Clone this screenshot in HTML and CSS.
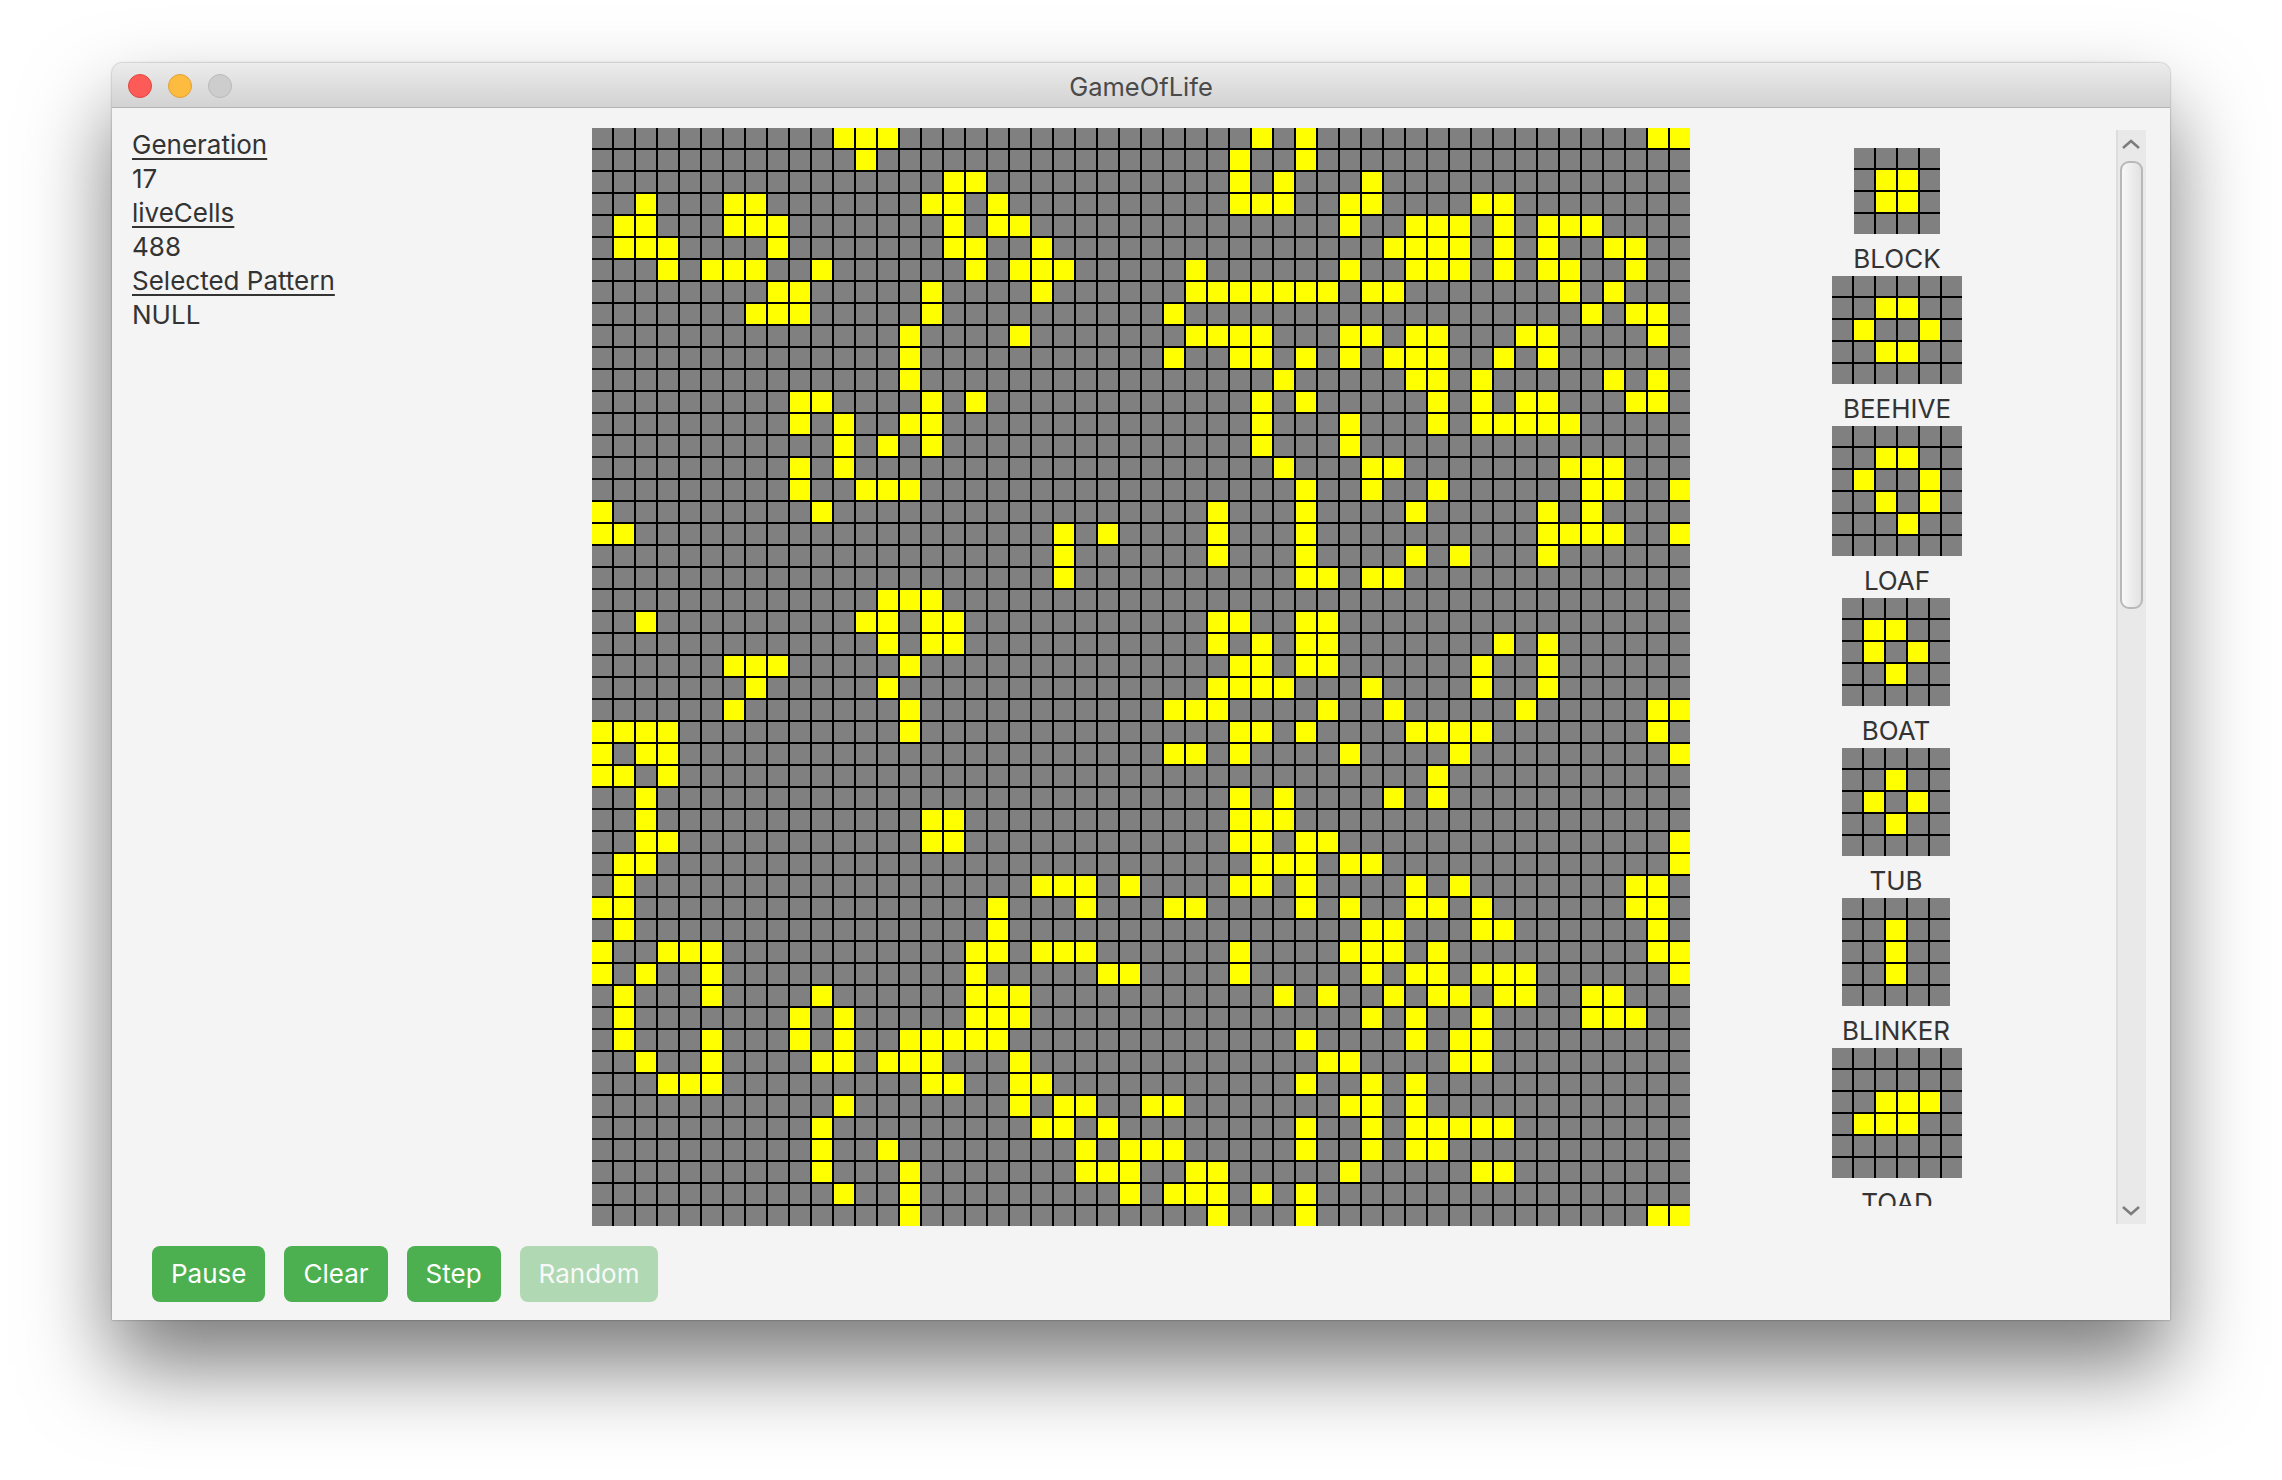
FILE: index.html
```html
<!doctype html>
<html lang="en">

<head>
  <meta charset="utf-8">
  <title>GameOfLife</title>
  <link rel="stylesheet" href="styles.css">
</head>

<body>
  <div class="window">
    <div class="titlebar">
      <div class="lights">
        <span class="light light-close"></span>
        <span class="light light-min"></span>
        <span class="light light-max"></span>
      </div>
      <div class="title">GameOfLife</div>
    </div>

    <div class="content">
      <div class="main">
        <div class="stats">
          <div class="stat-head">Generation</div>
          <div>17</div>
          <div class="stat-head">liveCells</div>
          <div>488</div>
          <div class="stat-head">Selected Pattern</div>
          <div>NULL</div>
        </div>

        <div class="board" id="board"></div>

        <div class="patterns">
          <div class="pattern-list" id="patterns"></div>
          <div class="scrollbar">
            <svg class="arrow" viewBox="0 0 18 10"><path d="M1 9 L9 2 L17 9" /></svg>
            <div class="thumb"></div>
            <svg class="arrow arrow-down" viewBox="0 0 18 10"><path d="M1 1 L9 8 L17 1" /></svg>
          </div>
        </div>
      </div>

      <div class="buttons">
        <button class="btn">Pause</button>
        <button class="btn">Clear</button>
        <button class="btn">Step</button>
        <button class="btn btn-disabled">Random</button>
      </div>
    </div>
  </div>

  <script src="game.js"></script>
</body>
</html>
```

FILE: styles.css
```css
body {
  margin: 0;
  height: 1480px;
  overflow: hidden;
  background-color: #fff;
  font-family: Inter, "Liberation Sans", sans-serif;
  font-size: 26px;
  color: #333;
}

.window {
  width: 2058px;
  height: 1257px;
  margin: 63px 0 0 112px;
  border-radius: 10px 10px 0 0;
  background-color: #f4f4f4;
  box-shadow: 0 0 2px rgba(0, 0, 0, 0.45), 0 46px 86px rgba(0, 0, 0, 0.52);
}

.titlebar {
  position: relative;
  display: flex;
  align-items: center;
  justify-content: center;
  box-sizing: border-box;
  height: 45px;
  padding-top: 2px;
  border-bottom: 1px solid #b3b3b3;
  border-radius: 10px 10px 0 0;
  background: linear-gradient(#ececec, #d2d2d2);
}
.lights {
  position: absolute;
  left: 16px;
  top: 11px;
  display: flex;
  gap: 16px;
}
.light {
  width: 24px;
  height: 24px;
  box-sizing: border-box;
  border-radius: 50%;
  border: 1px solid;
}
.light-close {
  background-color: #fc5b57;
  border-color: #e2463f;
}
.light-min {
  background-color: #fdbb3f;
  border-color: #e1a136;
}
.light-max {
  background-color: #cdcdcd;
  border-color: #b9b9b9;
}
.title {
  font-size: 25.5px;
  color: #4a4a4a;
}

.main {
  display: flex;
  height: 1098px;
  padding-top: 20px;
}

.stats {
  width: 460px;
  padding-left: 20px;
  line-height: 34px;
}
.stat-head {
  text-decoration: underline;
  text-decoration-thickness: 2px;
  text-underline-offset: 4px;
}

.board, .mini-board {
  display: grid;
  gap: 2px;
  background-color: #000;
  flex: none;
}
.board {
  grid-template-columns: repeat(50, 20px);
  grid-auto-rows: 20px;
  height: 1098px;
}
.mini-board {
  grid-auto-rows: 20px;
}
.cell {
  background-color: #808080;
}
.cell.alive {
  background-color: #ff0;
}

.patterns {
  display: flex;
  flex: 1;
  height: 1094px;
  margin-top: 2px;
}
.pattern-list {
  width: 414px;
  padding: 18px 12px 0 0;
  height: 1058px;
  overflow: hidden;
  display: flex;
  flex-direction: column;
  align-items: center;
}
.pattern-item {
  display: flex;
  flex-direction: column;
  align-items: center;
  flex: none;
}
.pattern-item.narrow {
  margin-right: 2px;
}
.pattern-name {
  height: 42px;
  line-height: 50px;
}

.scrollbar {
  position: relative;
  box-sizing: border-box;
  width: 30px;
  height: 1094px;
  background-color: #e9e9e9;
  border-left: 2px solid #dcdcdc;
}
.arrow {
  position: absolute;
  left: 4px;
  top: 9px;
  width: 18px;
  height: 10px;
  fill: none;
  stroke: #7d7d7d;
  stroke-width: 2.5;
}
.arrow-down {
  top: auto;
  bottom: 8px;
}
.thumb {
  position: absolute;
  left: 2px;
  top: 31px;
  box-sizing: border-box;
  width: 23px;
  height: 448px;
  border: 2px solid #b8b8b8;
  border-radius: 9px;
  background: linear-gradient(to right, #f8f8f8, #e2e2e2);
}

.buttons {
  display: flex;
  align-items: flex-start;
  gap: 19px;
  padding: 20px 0 0 40px;
}
.btn {
  height: 56px;
  padding: 0 19px 2px;
  border: 0;
  border-radius: 8px;
  background-color: #4caf50;
  color: #fff;
  font-family: inherit;
  font-size: 26px;
}
.btn-disabled {
  opacity: 0.4;
}
```

FILE: game.js
```js
// live cells of the board, one list of columns per row
const liveCells = [
  [11,12,13,30,32,48,49],
  [12,29,32],
  [16,17,29,31,35],
  [2,6,7,15,16,18,29,30,31,34,35,40,41],
  [1,2,6,7,8,16,18,19,34,37,38,39,41,43,44,45],
  [1,2,3,8,16,17,20,36,37,38,39,41,43,46,47],
  [3,5,6,7,10,17,19,20,21,27,34,37,38,39,41,43,44,47],
  [8,9,15,20,27,28,29,30,31,32,33,35,36,44,46],
  [7,8,9,15,26,45,47,48],
  [14,19,27,28,29,30,34,35,37,38,42,43,48],
  [14,26,29,30,32,34,36,37,38,41,43],
  [14,31,37,38,40,46,48],
  [9,10,15,17,30,32,38,40,42,43,47,48],
  [9,11,14,15,30,34,38,40,41,42,43,44],
  [11,13,15,30,34],
  [9,11,31,35,36,44,45,46],
  [9,12,13,14,32,35,38,45,46,49],
  [0,10,28,32,37,43,45],
  [0,1,21,23,28,32,43,44,45,46,49],
  [21,28,32,37,39,43],
  [21,32,33,35,36],
  [13,14,15],
  [2,12,13,15,16,28,29,32,33],
  [13,15,16,28,30,32,33,41,43],
  [6,7,8,14,29,30,32,33,40,43],
  [7,13,28,29,30,31,35,40,43],
  [6,14,26,27,28,33,36,42,48,49],
  [0,1,2,3,14,29,30,32,37,38,39,40,48],
  [0,2,3,26,27,29,34,39,49],
  [0,1,3,38],
  [2,29,31,36,38],
  [2,15,16,29,30,31],
  [2,3,15,16,29,30,32,33,49],
  [1,2,30,31,32,34,35,49],
  [1,20,21,22,24,29,30,32,37,39,47,48],
  [0,1,18,22,26,27,32,34,37,38,40,47,48],
  [1,18,35,36,40,41,48],
  [0,3,4,5,17,18,20,21,22,29,34,35,36,38,48,49],
  [0,2,5,17,23,24,29,35,37,38,40,41,42,49],
  [1,5,10,17,18,19,31,33,36,38,39,41,42,45,46],
  [1,9,11,17,18,19,35,37,40,45,46,47],
  [1,5,9,11,14,15,16,17,18,32,37,39,40],
  [2,5,10,11,13,14,15,19,33,34,39,40],
  [3,4,5,15,16,19,20,32,35,37],
  [11,19,21,22,25,26,34,35,37],
  [10,20,21,23,32,35,37,38,39,40,41],
  [10,13,22,24,25,26,32,35,37,38],
  [10,14,22,23,24,27,28,34,40,41],
  [11,14,24,26,27,28,30,32],
  [14,28,32,48,49]
];

const patterns = [
  { name: "BLOCK", cols: 4, rows: [[], [1,2], [1,2], []] },
  { name: "BEEHIVE", cols: 6, rows: [[], [2,3], [1,4], [2,3], []] },
  { name: "LOAF", cols: 6, rows: [[], [2,3], [1,4], [2,4], [3], []] },
  { name: "BOAT", cols: 5, rows: [[], [1,2], [1,3], [2], []] },
  { name: "TUB", cols: 5, rows: [[], [2], [1,3], [2], []] },
  { name: "BLINKER", cols: 5, rows: [[], [2], [2], [2], []] },
  { name: "TOAD", cols: 6, rows: [[], [], [2,3,4], [1,2,3], [], []] }
];

function fillCells(parent, rows, cols) {
  rows.forEach(function(row) {
    for (let c = 0; c < cols; c++) {
      const cell = document.createElement("div");
      cell.className = row.includes(c) ? "cell alive" : "cell";
      parent.appendChild(cell);
    }
  });
}

fillCells(document.getElementById("board"), liveCells, 50);

const list = document.getElementById("patterns");
patterns.forEach(function(p) {
  const item = document.createElement("div");
  item.className = p.cols === 5 ? "pattern-item narrow" : "pattern-item";

  const mini = document.createElement("div");
  mini.className = "mini-board";
  mini.style.gridTemplateColumns = `repeat(${p.cols}, 20px)`;
  fillCells(mini, p.rows, p.cols);

  const name = document.createElement("div");
  name.className = "pattern-name";
  name.textContent = p.name;

  item.appendChild(mini);
  item.appendChild(name);
  list.appendChild(item);
});
```
